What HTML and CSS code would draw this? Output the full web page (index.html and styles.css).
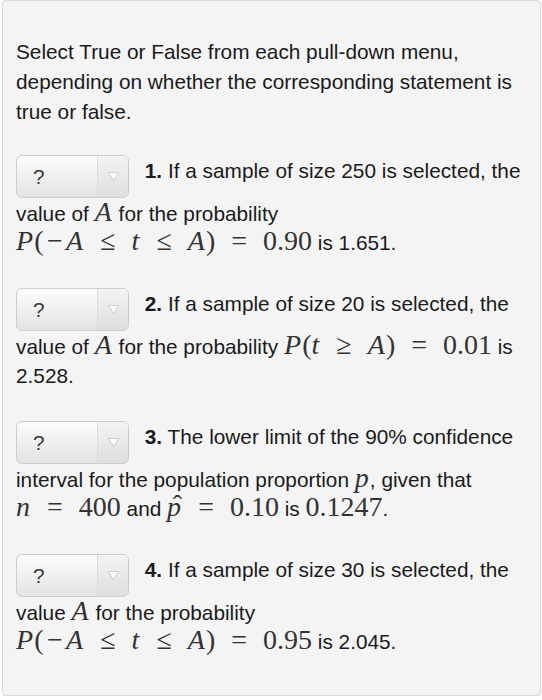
FILE: index.html
```html
<!DOCTYPE html>
<html lang="en">
<head>
  <meta charset="UTF-8" />
  <meta name="viewport" content="width=device-width, initial-scale=1.0"/>
  <title>True or False</title>
  <link rel="stylesheet" href="styles.css">
</head>
<body>
  <div class="panel">
    <p class="intro">Select True or False from each pull-down menu, depending on whether the corresponding statement is true or false.</p>

    <div class="item">
      <span class="select"><span class="select-value">?</span><span class="select-arrow"><svg width="13" height="11" viewBox="0 0 13 11"><polygon points="1,1.5 12,1.5 6.5,10" fill="#b4b4b4"/><polygon points="2,2 11,2 6.5,9" fill="#fff"/></svg></span></span>
      <b>1.</b> If a sample of size 250 is selected, the value of <span class="math"><i>A</i></span> for the probability
      <span class="math"><i>P</i>(<span class="op">−</span><i>A</i><span class="rel">≤</span><i>t</i><span class="rel">≤</span><i>A</i>)<span class="rel">=</span>0.90</span> is 1.651.
    </div>

    <div class="item">
      <span class="select"><span class="select-value">?</span><span class="select-arrow"><svg width="13" height="11" viewBox="0 0 13 11"><polygon points="1,1.5 12,1.5 6.5,10" fill="#b4b4b4"/><polygon points="2,2 11,2 6.5,9" fill="#fff"/></svg></span></span>
      <b>2.</b> If a sample of size 20 is selected, the value of <span class="math"><i>A</i></span> for the probability
      <span class="math"><i>P</i>(<i>t</i><span class="rel">≥</span><i>A</i>)<span class="rel">=</span>0.01</span> is 2.528.
    </div>

    <div class="item">
      <span class="select"><span class="select-value">?</span><span class="select-arrow"><svg width="13" height="11" viewBox="0 0 13 11"><polygon points="1,1.5 12,1.5 6.5,10" fill="#b4b4b4"/><polygon points="2,2 11,2 6.5,9" fill="#fff"/></svg></span></span>
      <b>3.</b> The lower limit of the 90% confidence interval for the population proportion <span class="math"><i>p</i></span>, given that
      <span class="math"><i>n</i><span class="rel">=</span>400</span> and <span class="math"><i class="hat">p</i><span class="rel">=</span>0.10</span> is <span class="math">0.1247</span>.
    </div>

    <div class="item">
      <span class="select"><span class="select-value">?</span><span class="select-arrow"><svg width="13" height="11" viewBox="0 0 13 11"><polygon points="1,1.5 12,1.5 6.5,10" fill="#b4b4b4"/><polygon points="2,2 11,2 6.5,9" fill="#fff"/></svg></span></span>
      <b>4.</b> If a sample of size 30 is selected, the value <span class="math"><i>A</i></span> for the probability
      <span class="math"><i>P</i>(<span class="op">−</span><i>A</i><span class="rel">≤</span><i>t</i><span class="rel">≤</span><i>A</i>)<span class="rel">=</span>0.95</span> is 2.045.
    </div>
  </div>
</body>
</html>
```

FILE: styles.css
```css
:root {
  --panel-bg: #f4f4f4;
  --border: #d8d8d8;
  --text: #1a1a1a;
  --math: #333333;
}

body {
  margin: 0;
  padding: 0 1px 0 2px;
  font-family: "Liberation Sans", Arial, sans-serif;
  font-size: 1.3rem;
  color: var(--text);
  background: #ffffff;
}

.panel {
  box-sizing: border-box;
  height: 696px;
  padding: 36px 10px 0 13px;
  background: var(--panel-bg);
  border: 1px solid var(--border);
  border-radius: 4px;
  box-shadow: 0 1px 1px rgba(0, 0, 0, 0.06);
}

.intro {
  margin: 0;
  line-height: 30px;
}

.item {
  margin-top: 28px;
  line-height: 29px;
}

.item + .item {
  margin-top: 31px;
}

/* pull-down */
.select {
  display: inline-flex;
  align-items: stretch;
  box-sizing: border-box;
  width: 113px;
  height: 43px;
  margin: 0 10px 1px 0;
  border: 1px solid #cdcdcd;
  border-radius: 6px;
  background: linear-gradient(#fcfcfc, #e3e3e3);
  vertical-align: -6px;
}

.select-value {
  flex: 1;
  display: flex;
  align-items: center;
  padding-left: 16px;
  color: #3a3a3a;
}

.select-arrow {
  width: 30px;
  display: flex;
  align-items: center;
  justify-content: center;
  border-left: 1px solid #dcdcdc;
  background: linear-gradient(#f3f3f3, #dedede);
  border-radius: 0 5px 5px 0;
}

/* inline maths */
.math {
  font-family: "Liberation Serif", "Times New Roman", serif;
  font-size: 28px;
  line-height: 20px;
  color: var(--math);
  white-space: nowrap;
}

.math i {
  padding-right: 0.04em;
}

.rel {
  padding: 0 0.57em;
}

.op {
  padding: 0 0.12em;
}

.hat {
  position: relative;
}

.hat::before {
  content: "ˆ";
  position: absolute;
  left: 0.2em;
  top: 0.15em;
  font-style: normal;
}
```
